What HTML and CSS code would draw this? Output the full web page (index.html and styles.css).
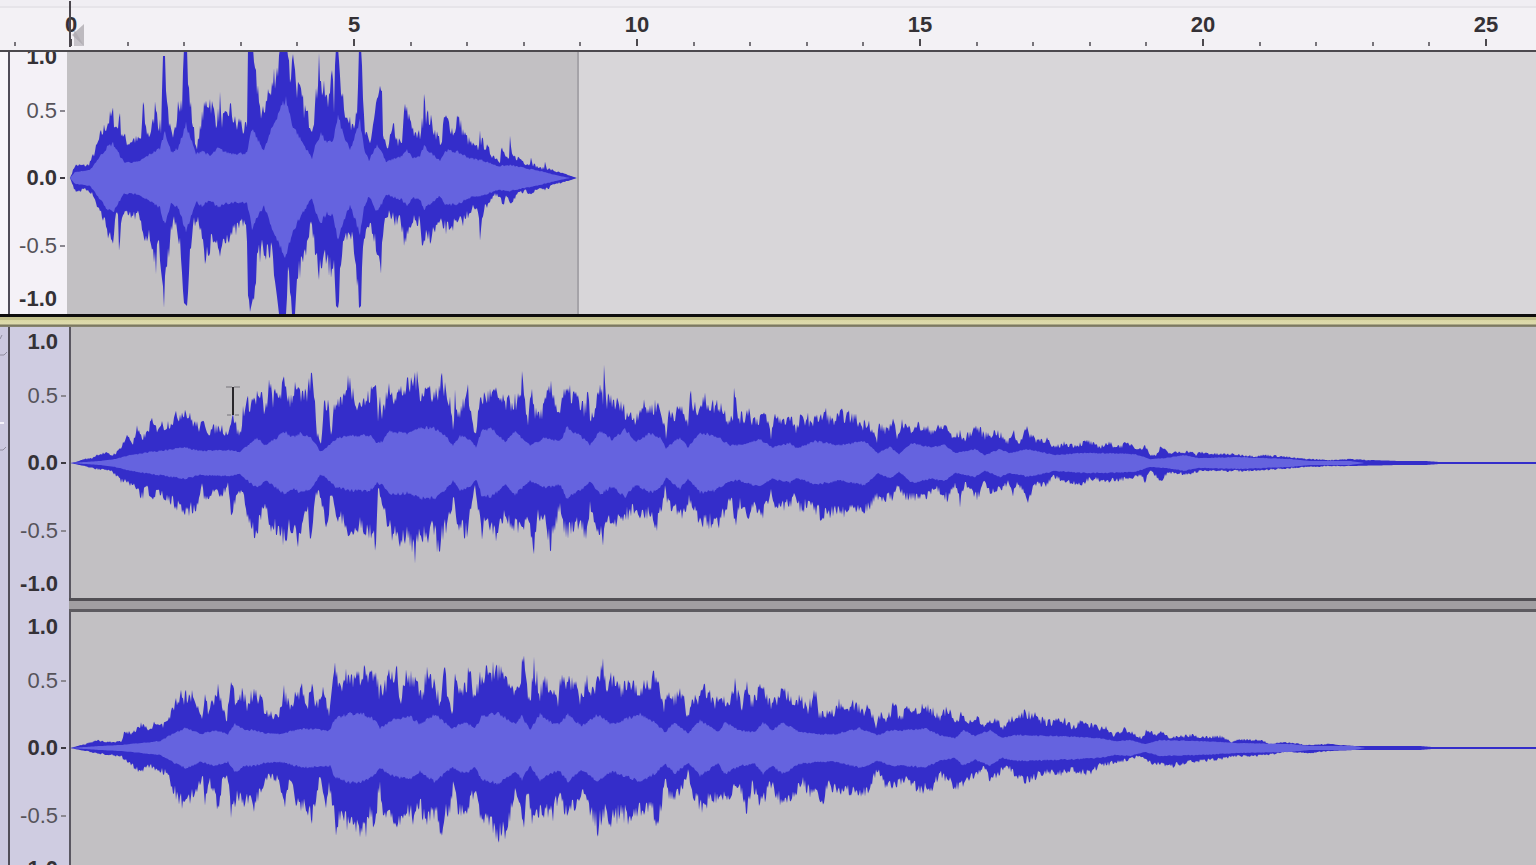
FILE: index.html
```
<!DOCTYPE html>
<html lang="en">
<head>
  <meta charset="UTF-8">
  <meta name="viewport" content="width=device-width, initial-scale=1.0">
  <title>Audio Tracks</title>
  <link rel="stylesheet" href="styles.css">
</head>
<body>
  <header class="timeline">
    <div class="lead"><i></i></div>
    <div class="scale" id="scale"></div>
    <svg class="playhead" width="20" height="48" viewBox="0 0 20 48">
      <path d="M16 24V46L4 35Z" fill="#bdbabf"/>
      <path d="M6 29V46L16 46Z" fill="#aaa6ad" opacity=".6"/>
      <path d="M2 1V47" stroke="#4b474d" stroke-width="2"/>
    </svg>
  </header>

  <main class="tracks">
    <section class="track mono">
      <div class="panel"></div>
      <div class="channel">
        <div class="levels">
          <b>1.0</b><span>0.5</span><b class="zero">0.0</b><span>-0.5</span><b>-1.0</b>
        </div>
        <div class="wave">
          <svg id="wave1" viewBox="67 -136 1469 272" preserveAspectRatio="none">
            <rect x="67" y="-136" width="512" height="272" fill="#c2c0c3"/>
            <rect x="577" y="-136" width="2" height="272" fill="#a5a3a8"/>
          </svg>
        </div>
      </div>
    </section>

    <section class="track stereo">
      <div class="panel">
        <svg width="8" height="130" viewBox="0 0 8 130" fill="none" stroke="#8f8c9e">
          <path d="M0 12L2 8M0 28H4L7 25M0 123H3L6 120"/>
          <path d="M0 96H4" stroke="#f4f2fa" stroke-width="2"/>
        </svg>
      </div>
      <div class="channels">
        <div class="channel">
          <div class="levels">
            <b>1.0</b><span>0.5</span><b class="zero">0.0</b><span>-0.5</span><b>-1.0</b>
          </div>
          <div class="wave">
            <svg id="wave2" viewBox="71 -136 1465 271" preserveAspectRatio="none"></svg>
            <svg class="ibeam" width="16" height="32" viewBox="0 0 16 32" fill="none" stroke="#29272b">
              <path d="M1 2H7M9 2H15M2 30H6M10 30H14" stroke="#77757a"/>
              <path d="M8 2V30" stroke-width="2"/>
            </svg>
          </div>
        </div>
        <div class="divider"></div>
        <div class="channel">
          <div class="levels">
            <b>1.0</b><span>0.5</span><b class="zero">0.0</b><span>-0.5</span><b>-1.0</b>
          </div>
          <div class="wave">
            <svg id="wave3" viewBox="71 -136 1465 271" preserveAspectRatio="none"></svg>
          </div>
        </div>
      </div>
    </section>
  </main>

  <script src="waves.js"></script>
</body>
</html>
```
FILE: styles.css
```
* { box-sizing: border-box; }
body { margin: 0; height: 100vh; overflow: hidden; display: flex; flex-direction: column; background: #c2c0c3; font-family: "Liberation Sans", Arial, sans-serif; font-size: 22px; line-height: 24px; color: #343136; }

.timeline { position: relative; display: flex; flex: none; height: 52px; background: linear-gradient(#f0eef3 6px, #e6e4e9 6px, #e6e4e9 8px, #f3f1f5 8px); border-bottom: 2px solid #4c494e; }
.lead { width: 70px; display: flex; align-items: flex-end; padding: 0 0 4px 14px; }
.lead i { width: 2px; height: 4px; background: #77747a; }
.scale { flex: 1; display: grid; grid-template-columns: repeat(5, 283fr) 51fr; }
.second { display: flex; flex-direction: column; justify-content: space-between; padding-top: 13px; min-width: 0; font-weight: bold; }
.second span { width: 40px; margin-left: -19px; text-align: center; }
.ticks { display: grid; grid-template-columns: repeat(5, 1fr); align-items: end; height: 9px; margin-bottom: 4px; }
.ticks i { width: 2px; height: 4px; background: #77747a; }
.ticks i:first-child { height: 7px; background: #4c494e; }
.playhead { position: absolute; left: 68px; top: 0; }

.tracks { flex: 1; min-height: 0; overflow: hidden; }
.track { display: flex; }
.panel { flex: none; width: 10px; border-right: 2px solid #504d58; }
.panel svg { display: block; }
.mono { height: 265px; overflow: hidden; border-bottom: 3px solid #0e0d0d; background: #d8d6d9; }
.mono .panel { background: #f8f6fa; }
.mono .levels { width: 57px; background: #f4f1f7; }
.mono .channel { margin-top: -10px; }
.stereo { border-top: 10px solid #c7c58f; border-image: linear-gradient(#c2c08c 3px, #dad7a4 3px, #dedbae 7px, #77745a 8px, #8b8875 10px) 10; background: #cfcce1; }
.stereo .panel { background: #cbc8df; }
.stereo .wave { border-left: 2px solid #5a5761; background: #c2c0c3; }

.channels, .channel { flex: 1; min-width: 0; }
.channel { display: flex; height: 271px; }
.mono .channel { height: 272px; }
.levels { flex: none; width: 59px; display: grid; grid-template-rows: 30px 78px 56px 79px 28px; align-items: center; }
.levels b, .levels span { display: flex; align-items: center; justify-content: flex-end; padding-right: 1px; }
.mono .levels b, .mono .levels span { padding-right: 0; }
.levels span { color: #56535a; }
.levels b::after, .levels span::after { content: ""; width: 5px; height: 2px; margin: 0 2px 0 3px; background: #8b8891; }
.levels b::after { background: transparent; }
.levels .zero::after { background: #3d3a42; }
.wave { position: relative; flex: 1; min-width: 0; }
.wave > svg:first-child { display: block; width: 100%; height: 100%; }
.wave .peak { fill: #342dca; }
.wave .rms { fill: #6563df; }
.wave .ibeam { position: absolute; left: 154px; top: 58px; }
.divider { height: 14px; margin-left: 59px; background: #a19fa2; border-top: 3px solid #514f54; border-bottom: 3px solid #5d5b60; }
```
FILE: waves.js
```
const SVG_NS = 'http://www.w3.org/2000/svg';

// Envelopes: "x height" pairs, measured from the zero line
const WAVES = {
  wave1: {
    up: '70 0 75 13 88 13 92 20 96 30 100 42 105 52 108 58 113 65 116 52 118 52 119 69 121 50 124 42 128 36 134 40 137 38 141 40 143 74 146 50 149 44 153 55 156 80 158 58 161 50 163 122 165 122 167 80 170 50 173 37 176 55 178 86 182 75 184 130 187 130 188 97 191 70 194 47 196 33 199 38 201 58 205 72 207 79 210 80 213 70 216 60 219 65 220 84 221 60 226 60 230 72 233 62 237 52 240 60 243 50 247 50 248 130 253 130 255 102 259 88 261 60 264 68 267 88 271 85 274 105 278 115 280 130 287 130 290 105 293 124 296 98 300 85 304 72 308 62 312 54 314 65 317 90 319 125 321 95 325 85 328 75 331 115 334 75 336 130 338 130 340 105 343 85 347 60 350 55 354 60 357 75 359 130 361 130 363 75 365 45 370 35 373 55 377 78 380 85 382 78 383 45 386 30 390 40 394 52 397 38 402 34 404 70 407 66 411 60 415 42 420 45 423 60 424 98 426 65 430 60 434 50 438 42 442 35 444 62 450 55 454 45 457 62 460 56 464 45 470 36 476 30 479 32 480 55 481 38 486 32 492 24 500 18 501 33 505 22 509 20 510 38 512 22 520 20 526 15 530 14 531 24 533 14 540 10 544 10 545 16 547 10 555 7 565 4 574 1 577 0',
    down: '70 0 75 13 88 12 92 16 98 30 105 45 108 55 113 65 116 40 118 40 119 72 121 45 124 38 132 40 138 38 143 55 145 60 148 58 152 66 156 86 159 68 161 85 163 110 164 130 166 90 169 75 171 48 176 45 179 65 182 85 184 125 187 128 190 80 193 50 197 40 201 50 205 90 208 78 212 62 216 72 220 78 224 60 230 58 235 55 240 48 246 45 248 110 250 134 253 120 256 95 259 80 262 68 267 80 272 75 276 110 279 136 286 136 289 85 292 136 295 136 297 100 301 90 306 70 311 50 314 60 319 105 322 85 327 85 330 95 334 80 336 128 338 130 341 85 346 65 352 60 356 85 359 130 361 128 363 70 368 45 372 50 377 70 381 88 383 60 385 38 392 40 396 45 400 35 404 65 408 60 414 45 420 45 423 78 426 62 432 58 438 48 444 50 447 52 452 48 457 48 465 42 472 30 477 35 479 38 480 62 482 38 488 25 494 18 500 20 503 30 507 18 511 25 516 18 525 14 533 15 540 10 546 12 555 6 565 4 574 1 577 0',
    rms: '70 0 75 6 90 8 100 22 108 32 113 35 118 26 124 16 138 16 150 24 160 30 165 48 171 26 178 30 186 54 190 42 196 24 202 28 210 22 218 30 226 26 232 25 247 25 252 50 258 38 264 28 272 50 279 68 286 80 292 55 300 40 306 30 312 20 316 35 321 45 327 35 333 38 338 62 344 42 350 28 355 42 360 58 364 30 369 18 377 34 382 26 386 16 395 20 402 22 407 28 413 20 420 22 424 32 430 26 440 18 446 28 458 26 470 20 482 18 498 12 510 13 520 11 540 7 560 2 570 0'
  },
  wave2: {
    up: '70 0 76 1 84 4 92 5 98 9 106 10 112 8 118 12 124 22 128 28 133 20 137 34 141 26 146 28 151 42 156 35 160 40 165 38 170 42 176 47 180 50 184 55 190 46 195 40 200 36 205 42 208 32 214 35 222 36 227 30 232 46 235 46 237 32 241 30 243 55 247 60 252 63 257 68 262 65 265 50 269 78 273 66 278 70 285 80 290 64 297 84 300 66 304 65 308 72 311 88 314 78 317 30 321 22 324 62 328 60 331 32 335 60 340 65 345 68 349 86 353 72 358 62 365 62 369 68 373 75 376 82 378 50 380 65 382 50 385 60 390 80 394 70 400 72 405 76 410 78 415 88 420 74 430 76 435 68 441 82 443 84 447 66 452 55 453 34 455 70 458 50 463 58 468 72 472 45 474 34 477 34 479 62 485 68 495 70 505 60 512 62 521 65 522 90 524 62 528 45 532 78 535 50 541 50 545 60 550 76 555 66 559 50 562 68 570 70 576 68 580 58 586 55 588 76 590 42 595 55 600 72 603 68 604 88 606 65 612 64 620 58 628 50 635 45 641 58 650 55 658 60 664 42 666 25 669 54 675 50 682 56 688 38 690 68 695 55 700 60 706 64 712 58 720 60 728 45 733 50 734 72 738 48 745 45 747 58 752 45 758 44 762 50 768 42 771 28 775 48 784 42 790 50 796 32 800 44 808 46 812 36 815 54 819 42 825 52 832 42 842 49 855 46 862 38 868 44 873 32 877 22 879 40 884 33 893 40 898 26 901 42 910 34 915 40 925 34 935 34 947 38 952 25 960 30 964 24 976 37 985 28 997 32 1008 20 1013 34 1018 20 1026 34 1036 24 1048 24 1052 15 1065 20 1075 18 1088 22 1098 16 1107 20 1118 17 1130 20 1140 14 1145 18 1150 8 1157 9 1161 17 1168 10 1190 12 1196 8 1200 11 1215 9 1230 9 1245 8 1255 7 1265 8 1280 7 1295 5 1310 4 1330 3 1350 4 1370 3 1400 2 1425 2 1440 1 1536 1',
    down: '70 0 84 3 96 6 106 7 112 8 120 18 128 20 135 26 142 35 146 25 152 34 160 30 168 36 175 42 182 46 188 48 195 46 199 35 202 22 205 38 215 30 222 34 228 22 231 52 235 38 239 28 242 28 246 48 250 60 255 70 260 62 262 45 267 52 272 65 280 68 286 80 290 62 298 80 304 60 308 48 311 78 314 40 318 28 322 40 327 65 331 30 335 48 342 60 350 70 356 72 362 62 370 70 376 80 378 30 380 30 384 50 390 68 400 78 408 72 415 90 420 70 428 82 433 65 438 85 444 68 450 55 453 36 457 58 463 68 468 72 471 45 475 22 479 50 481 56 482 92 484 55 490 65 498 74 502 55 510 60 520 68 523 76 526 52 534 84 537 52 546 55 550 84 555 62 560 45 563 68 572 70 580 60 586 76 590 45 595 60 603 82 607 60 620 58 628 52 634 46 641 56 650 50 657 62 662 44 665 26 668 42 675 45 683 58 689 36 695 52 705 60 717 62 725 48 732 34 735 60 740 40 748 55 755 45 760 58 768 40 771 28 775 48 790 42 795 30 801 48 808 40 824 55 835 46 842 50 855 44 868 46 876 32 880 38 893 34 898 22 903 34 915 36 925 34 935 26 948 36 955 22 960 40 965 20 977 36 984 20 990 32 1003 26 1008 20 1013 32 1018 20 1028 36 1036 22 1046 22 1053 14 1065 18 1082 22 1090 16 1110 18 1128 16 1140 12 1145 18 1150 8 1161 18 1168 10 1190 11 1200 8 1230 8 1255 8 1280 6 1310 4 1330 3 1350 3 1400 2 1425 2 1440 1 1536 1',
    rms: '70 0 100 2 115 4 130 8 150 11 165 13 185 16 200 12 220 13 232 13 240 11 250 20 257 25 265 18 272 22 285 32 293 26 300 30 312 25 320 12 325 14 335 24 350 28 370 28 377 20 382 22 390 32 410 30 420 36 435 35 445 28 453 18 460 28 470 24 476 16 482 34 492 34 505 22 515 32 530 18 545 25 560 22 567 36 585 24 590 18 600 32 612 24 625 34 636 22 650 30 660 26 666 15 680 26 688 16 700 30 715 28 730 18 740 18 760 24 772 16 790 20 797 15 815 22 840 18 865 22 878 10 890 16 899 9 912 20 930 16 945 18 955 10 975 14 985 8 1000 14 1010 10 1028 14 1055 8 1080 10 1110 10 1135 9 1150 4 1165 5 1185 8 1198 5 1240 6 1290 4 1310 2 1350 2 1365 0'
  },
  wave3: {
    up: '70 0 85 4 98 8 108 6 122 7 125 18 132 14 140 24 146 20 154 24 161 22 168 26 173 40 178 54 184 52 192 56 196 46 200 36 202 28 205 60 208 40 214 46 218 62 222 42 227 30 231 68 236 46 243 60 247 42 253 58 260 50 265 40 272 32 279 32 284 58 290 40 296 54 303 62 307 42 312 66 316 44 324 58 329 35 331 50 335 82 340 66 348 76 355 70 362 76 372 76 376 80 379 55 380 62 383 55 389 78 394 68 398 76 400 48 404 70 412 72 418 60 422 52 427 78 434 64 439 50 443 64 444 94 446 66 452 34 455 68 460 60 467 66 468 85 475 50 480 70 488 76 495 80 502 74 508 68 513 62 517 58 521 64 523 96 527 60 530 45 534 84 540 56 545 70 552 62 558 48 561 70 571 68 576 60 580 48 588 70 592 58 598 72 603 82 608 60 613 74 620 60 629 70 635 58 645 64 650 58 656 80 660 58 664 36 667 62 672 50 682 56 687 34 692 44 698 52 706 60 714 46 722 48 730 44 735 64 741 42 747 62 752 45 761 64 766 52 771 42 783 56 795 50 801 48 808 40 815 57 819 36 825 34 834 36 841 48 845 36 853 44 862 38 870 40 876 22 880 34 888 30 894 46 899 32 910 40 930 40 940 30 948 40 955 26 961 36 970 26 976 32 984 22 996 30 1003 20 1012 30 1022 36 1036 32 1046 26 1065 28 1072 22 1083 26 1100 20 1108 20 1113 12 1125 20 1135 14 1142 10 1146 18 1155 14 1163 16 1170 10 1190 13 1205 11 1220 12 1232 6 1240 9 1262 8 1270 4 1280 6 1294 5 1305 3 1330 4 1355 2 1400 2 1420 2 1432 1 1536 1',
    down: '70 0 85 3 100 6 120 8 130 16 142 25 150 18 158 24 166 24 172 40 180 54 186 56 195 46 200 35 203 28 205 56 209 32 218 60 222 38 227 26 231 64 237 50 243 55 248 50 254 68 258 48 264 34 270 30 278 32 285 60 290 32 298 60 305 55 312 74 317 45 320 30 325 62 329 35 333 60 336 82 342 66 350 80 357 76 363 88 370 70 376 76 378 45 380 40 383 62 390 70 396 78 404 62 412 70 420 60 428 76 436 62 442 87 446 60 450 68 453 36 458 62 466 72 471 48 476 50 482 70 490 72 497 86 505 82 512 60 516 40 520 64 523 84 526 50 528 45 534 80 540 62 552 70 560 44 565 65 575 58 583 48 590 62 598 80 605 62 612 76 620 65 630 72 640 62 650 60 657 74 661 58 665 32 669 48 680 46 688 24 693 50 702 60 710 52 718 50 730 46 740 38 747 66 752 36 762 60 766 45 772 36 775 50 788 54 798 40 802 32 808 44 816 46 823 54 828 36 840 46 855 42 868 46 877 22 885 36 894 38 905 32 920 42 932 42 940 26 948 34 960 40 970 30 975 30 984 20 990 32 998 26 1006 18 1015 26 1026 34 1045 24 1060 26 1070 22 1088 26 1100 18 1120 14 1140 8 1150 15 1162 17 1172 18 1190 14 1220 11 1240 8 1260 8 1285 4 1310 5 1330 3 1355 2 1400 2 1420 2 1432 1 1536 1',
    rms: '70 0 100 2 120 3 140 5 160 7 170 13 185 20 192 18 200 14 215 18 228 14 235 25 245 18 255 18 265 15 280 14 295 18 310 20 325 18 330 18 335 30 350 35 365 34 375 28 380 20 392 28 410 32 420 24 435 34 452 20 465 26 475 20 482 32 498 36 515 24 522 32 530 18 540 34 552 25 560 24 568 34 582 22 597 34 612 24 640 34 655 26 665 16 675 26 688 15 700 28 718 16 725 26 740 18 755 16 763 26 772 18 783 26 800 16 820 14 835 14 860 20 878 13 890 18 905 18 925 20 940 13 955 10 963 18 975 12 990 18 1002 10 1015 13 1060 12 1100 10 1115 7 1130 8 1145 4 1160 8 1200 7 1240 5 1290 4 1310 2 1355 2 1365 0'
  }
};

// Small seeded generator, so the samples are the same on every load
let seed = 7;
function random() {
  seed = (seed * 16807) % 2147483647;
  return seed / 2147483647;
}

// One value per column, with some sample noise on top of the envelope
function columns(text, noise) {
  const nums = text.split(' ').map(Number);
  const out = [];
  let i = 0;
  for (let x = nums[0]; x <= nums[nums.length - 2]; x++) {
    while (i < nums.length - 4 && nums[i + 2] < x) i += 2;
    const t = (x - nums[i]) / (nums[i + 2] - nums[i]);
    const value = nums[i + 1] + (nums[i + 3] - nums[i + 1]) * t;
    out.push([x, value < 3 || value > 115 ? value : value * (1 + (random() - 0.6) * noise)]);
  }
  return out;
}

function addPath(svg, up, down, name) {
  const top = up.map(([x, h]) => `${x} ${(-h).toFixed(1)}`);
  const bottom = down.reverse().map(([x, h]) => `${x} ${h.toFixed(1)}`);
  const path = document.createElementNS(SVG_NS, 'path');
  path.setAttribute('class', name);
  path.setAttribute('d', `M${top.concat(bottom).join('L')}Z`);
  svg.appendChild(path);
}

Object.entries(WAVES).forEach(([id, wave]) => {
  const svg = document.getElementById(id);
  addPath(svg, columns(wave.up, 0.3), columns(wave.down, 0.3), 'peak');
  addPath(svg, columns(wave.rms, 0.12), columns(wave.rms, 0.12), 'rms');
});

document.getElementById('scale').innerHTML = [0, 5, 10, 15, 20, 25].map(s => `
  <div class="second"><span>${s}</span>
  <div class="ticks">${'<i></i>'.repeat(s < 25 ? 5 : 1)}</div></div>`).join('');
```
